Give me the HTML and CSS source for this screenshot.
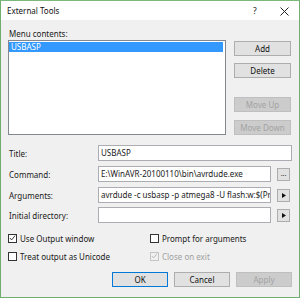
FILE: index.html
```html
<!DOCTYPE html>
<html>
<head>
<meta charset="utf-8">
<link rel="stylesheet" href="styles.css">
</head>
<body>
<div class="window">
  <div class="titlebar">
    <span class="title">External Tools</span>
    <span class="help">?</span>
    <span class="close">
      <svg width="9" height="9" viewBox="0 0 9 9"><path d="M0.5 0.5L8.5 8.5M8.5 0.5L0.5 8.5" stroke="#222" stroke-width="1"/></svg>
    </span>
  </div>
  <div class="content">
    <div class="top">
      <div class="leftcol">
        <div class="lbl">Menu contents:</div>
        <div class="list"><div class="item sel">USBASP</div></div>
      </div>
      <div class="rightcol">
        <div class="btn b-add">Add</div>
        <div class="btn b-del">Delete</div>
        <div class="btn dis b-up">Move Up</div>
        <div class="btn dis b-down">Move Down</div>
      </div>
    </div>
    <div class="form">
      <div class="row r1"><span class="flbl">Title:</span><div class="input full">USBASP</div></div>
      <div class="row r2"><span class="flbl">Command:</span><div class="input">E:\WinAVR-20100110\bin\avrdude.exe</div><div class="sbtn">...</div></div>
      <div class="row r3"><span class="flbl">Arguments:</span><div class="input">avrdude -c usbasp -p atmega8 -U flash:w:$(Proje</div><div class="sbtn"><svg width="4" height="5" viewBox="0 0 4 5"><path d="M0 0L4 2.5L0 5Z" fill="#111"/></svg></div></div>
      <div class="row r4"><span class="flbl">Initial directory:</span><div class="input"></div><div class="sbtn"><svg width="4" height="5" viewBox="0 0 4 5"><path d="M0 0L4 2.5L0 5Z" fill="#111"/></svg></div></div>
    </div>
    <div class="checks">
      <label class="chk c1"><span class="box"><svg width="8" height="8" viewBox="0 0 8 8"><path d="M1 4L3 6.2L7 1.2" fill="none" stroke="#222" stroke-width="1"/></svg></span>Use Output window</label>
      <label class="chk c2"><span class="box"></span>Prompt for arguments</label>
      <label class="chk c3"><span class="box"></span>Treat output as Unicode</label>
      <label class="chk c4 disabled"><span class="box"><svg width="8" height="8" viewBox="0 0 8 8"><path d="M1 4L3 6.2L7 1.2" fill="none" stroke="#b5b5b5" stroke-width="1"/></svg></span>Close on exit</label>
    </div>
    <div class="bottom">
      <div class="btn ok">OK</div>
      <div class="btn">Cancel</div>
      <div class="btn dis">Apply</div>
    </div>
  </div>
</div>
</body>
</html>
```

FILE: styles.css
```css
html, body {
  margin: 0;
  padding: 0;
  background: #f0f0f0;
}
body {
  font-family: "Noto Sans", "Open Sans", sans-serif;
  font-size: 8px;
  color: #1a1a1a;
}
.window {
  width: 300px;
  height: 298px;
  box-sizing: border-box;
  border: 1px solid #6fae6f;
  border-top-color: #7cb87c;
  background: #f0f0f0;
  overflow: hidden;
}
.titlebar {
  height: 19px;
  background: #fff;
  display: flex;
  align-items: center;
  position: relative;
}
.title {
  margin-left: 6px;
  font-size: 8px;
  color: #111;
}
.help {
  position: absolute;
  left: 252px;
  top: 4px;
  font-size: 8.5px;
  color: #222;
}
.close {
  position: absolute;
  left: 279px;
  top: 6px;
  line-height: 0;
}
.content {
  padding: 7px 6px 0 7px;
}
.top {
  display: grid;
  grid-template-columns: 218px 57px;
  column-gap: 8px;
}
.lbl {
  height: 13px;
  line-height: 13px;
  padding-left: 1px;
}
.list {
  height: 95px;
  box-sizing: border-box;
  border: 1px solid #828790;
  background: #fff;
  padding: 1px 2px 0 0;
}
.item {
  height: 10px;
  line-height: 10px;
  padding-left: 2px;
}
.sel {
  background: #3399ff;
  color: #fff;
}
.rightcol {
  padding-top: 14px;
}
.btn {
  height: 15px;
  box-sizing: border-box;
  border: 1px solid #adadad;
  background: #e1e1e1;
  text-align: center;
  line-height: 13px;
  color: #111;
}
.b-del { margin-top: 7px; }
.b-up { margin-top: 19px; }
.b-down { margin-top: 8px; }
.dis {
  background: #cccccc;
  border-color: #bfbfbf;
  color: #a3a3a3;
}
.form {
  margin-top: 10px;
}
.row {
  display: flex;
  align-items: center;
  height: 16px;
}
.r2 { margin-top: 5px; }
.r3 { margin-top: 5px; }
.r4 { margin-top: 4px; }
.flbl {
  width: 90px;
  padding-left: 1px;
  box-sizing: border-box;
}
.input {
  width: 173px;
  height: 16px;
  box-sizing: border-box;
  border: 1px solid #abadb3;
  background: #fff;
  line-height: 14px;
  padding-left: 2px;
  white-space: nowrap;
  overflow: hidden;
}
.input.full {
  width: 194px;
}
.sbtn {
  margin-left: 6px;
  width: 13px;
  height: 13px;
  box-sizing: border-box;
  border: 1px solid #adadad;
  background: #e1e1e1;
  display: flex;
  align-items: center;
  justify-content: center;
  font-size: 7px;
  line-height: 8px;
  color: #333;
}
.checks {
  margin-top: 10px;
  display: grid;
  grid-template-columns: 142px 140px;
  row-gap: 8px;
}
.chk {
  display: flex;
  align-items: center;
  height: 10px;
}
.box {
  width: 9px;
  height: 9px;
  box-sizing: border-box;
  border: 1px solid #333;
  background: #fff;
  margin-right: 3px;
  display: flex;
  align-items: center;
  justify-content: center;
}
.disabled {
  color: #a0a0a0;
}
.disabled .box {
  border-color: #c4c4c4;
  background: #f0f0f0;
}
.bottom {
  margin-top: 11px;
  display: flex;
  justify-content: flex-end;
  gap: 6px;
  padding-right: 1px;
}
.bottom .btn {
  width: 56px;
}
.ok {
  border-color: #0078d7;
}
```
